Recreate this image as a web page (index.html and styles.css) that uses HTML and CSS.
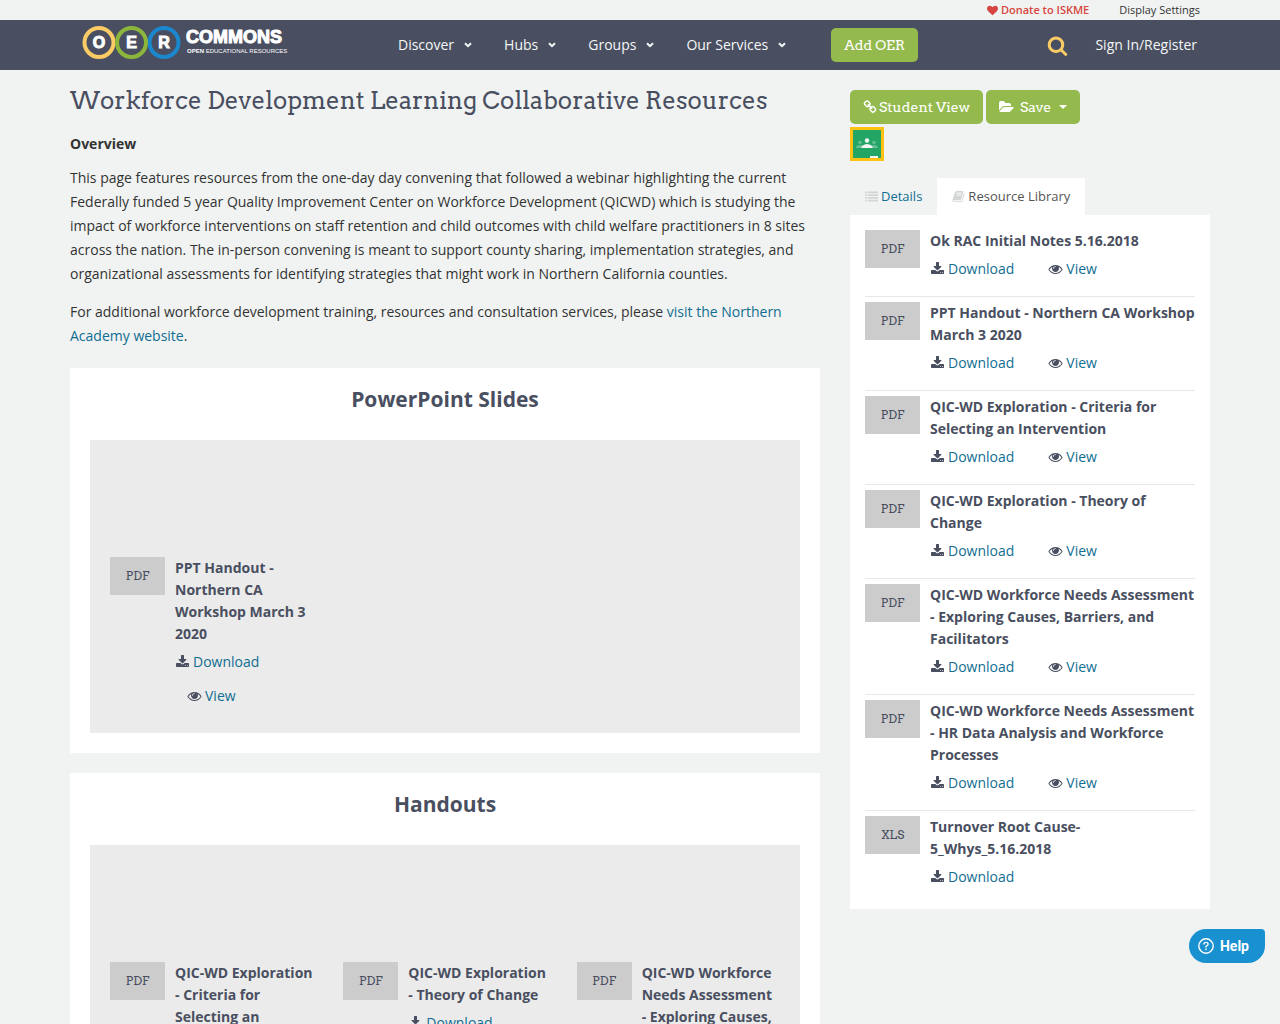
FILE: index.html
```html
<!DOCTYPE html>
<html lang="en">
<head>
<meta charset="utf-8">
<meta name="viewport" content="width=device-width, initial-scale=1">
<title>Workforce Development Learning Collaborative Resources | OER Commons</title>
<link rel="stylesheet" href="styles.css">
</head>
<body>
<svg class="sprite" aria-hidden="true">
  <symbol id="i-heart" viewBox="0 0 1792 1792"><path d="M896 1664q-26 0-44-18l-624-602q-10-8-27.500-26t-55.500-65.500-68-97.500-53.500-121-23.500-138q0-220 127-344t351-124q62 0 126.500 21.500t120 58 95.500 68.500 76 68q36-36 76-68t95.500-68.500 120-58 126.500-21.500q224 0 351 124t127 344q0 221-229 450l-623 600q-18 18-44 18z"/></symbol>
  <symbol id="i-search" viewBox="0 0 1792 1792"><path d="M1216 832q0-185-131.500-316.500t-316.500-131.500-316.500 131.500-131.500 316.500 131.500 316.500 316.500 131.500 316.500-131.500 131.500-316.500zm512 832q0 52-38 90t-90 38q-54 0-90-38l-343-342q-179 124-399 124-143 0-273.500-55.500t-225-150-150-225-55.500-273.500 55.500-273.500 150-225 225-150 273.500-55.500 273.500 55.500 225 150 150 225 55.500 273.500q0 220-124 399l343 343q37 37 37 90z"/></symbol>
  <symbol id="i-download" viewBox="0 0 1792 1792"><path d="M1344 1344q0-26-19-45t-45-19-45 19-19 45 19 45 45 19 45-19 19-45zm256 0q0-26-19-45t-45-19-45 19-19 45 19 45 45 19 45-19 19-45zm128-224v320q0 40-28 68t-68 28h-1472q-40 0-68-28t-28-68v-320q0-40 28-68t68-28h465l135 136q58 56 136 56t136-56l136-136h464q40 0 68 28t28 68zm-325-569q17 41-14 70l-448 448q-18 19-45 19t-45-19l-448-448q-31-29-14-70 17-39 59-39h256v-448q0-26 19-45t45-19h256q26 0 45 19t19 45v448h256q42 0 59 39z"/></symbol>
  <symbol id="i-eye" viewBox="0 0 1792 1792"><path d="M1664 960q-152-236-381-353 61 104 61 225 0 185-131.500 316.500t-316.500 131.500-316.500-131.500-131.500-316.500q0-121 61-225-229 117-381 353 133 205 333.500 326.500t434.500 121.500 434.500-121.500 333.500-326.500zm-720-384q0-20-14-34t-34-14q-125 0-214.500 89.500t-89.500 214.500q0 20 14 34t34 14 34-14 14-34q0-86 61-147t147-61q20 0 34-14t14-34zm848 384q0 34-20 69-140 230-376.500 368.500t-499.500 138.500-499.500-139-376.500-368q-20-35-20-69t20-69q140-229 376.500-368t499.500-139 499.500 139 376.500 368q20 35 20 69z"/></symbol>
  <symbol id="i-folder" viewBox="0 0 1920 1792"><path d="M1879 952q0 31-31 66l-336 396q-43 51-120.500 86.500t-143.500 35.500h-1088q-34 0-60.500-13t-26.500-43q0-31 31-66l336-396q43-51 120.500-86.500t143.500-35.500h1088q34 0 60.500 13t26.500 43zm-343-344v160h-832q-94 0-197 47.500t-164 119.500l-337 396-5 6q0-4-.5-12.500t-.5-12.500v-960q0-92 66-158t158-66h320q92 0 158 66t66 158v32h544q92 0 158 66t66 158z"/></symbol>
  <symbol id="i-link" viewBox="0 0 1792 1792"><path d="M1520 1216q0-40-28-68l-208-208q-28-28-68-28-42 0-72 32 3 3 19 18.500t21.500 21.500 15 19 13 25.500 3.500 27.500q0 40-28 68t-68 28q-15 0-27.500-3.500t-25.500-13-19-15-21.500-21.500-18.500-19q-33 31-33 73 0 40 28 68l206 207q27 27 68 27 40 0 68-26l147-146q28-28 28-67zm-703-705q0-40-28-68l-206-207q-28-28-68-28-39 0-68 27l-147 146q-28 28-28 67 0 40 28 68l208 208q27 27 68 27 42 0 72-31-3-3-19-18.500t-21.500-21.500-15-19-13-25.500-3.500-27.500q0-40 28-68t68-28q15 0 27.500 3.500t25.500 13 19 15 21.500 21.500 18.500 19q33-31 33-73zm895 705q0 120-85 203l-147 146q-83 83-203 83-121 0-204-85l-206-207q-83-83-83-203 0-123 88-209l-88-88q-86 88-208 88-120 0-204-84l-208-208q-84-84-84-204t85-203l147-146q83-83 203-83 121 0 204 85l206 207q83 83 83 203 0 123-88 209l88 88q86-88 208-88 120 0 204 84l208 208q84 84 84 204z"/></symbol>
  <symbol id="i-book" viewBox="0 0 1792 1792"><path d="M1703 478q40 57 18 129l-275 906q-19 64-76.500 107.500t-122.500 43.500h-923q-77 0-148.500-53.500t-99.500-131.500q-24-67-2-127 0-4 3-27t4-37q1-8-3-21.500t-3-19.500q2-11 8-21t16.500-23.500 16.500-23.500q23-38 45-91.500t30-91.500q3-10 .5-30t-.5-28q3-11 17-28t17-23q21-36 42-92t25-90q1-9-2.500-32t.5-28q4-13 22-30.500t22-22.500q19-26 42.500-84.500t27.500-96.500q1-8-3-25.500t-2-26.500q2-8 9-18t18-23 17-21q8-12 16.500-30.500t15-35 16-36 19.500-32 26.500-23.500 36-11.500 47.500 5.500l-1 3q38-9 51-9h761q74 0 114 56t18 130l-274 906q-36 119-71.500 153.500t-128.500 34.500h-869q-27 0-38 15-11 16-1 43 24 70 144 70h923q29 0 56-15.500t35-41.500l300-987q7-22 5-57 38 15 59 43zm-1064 2q-4 13 2 22.500t20 9.500h608q13 0 25.500-9.500t16.500-22.500l21-64q4-13-2-22.500t-20-9.500h-608q-13 0-25.500 9.500t-16.500 22.500zm-83 256q-4 13 2 22.500t20 9.500h608q13 0 25.500-9.500t16.500-22.500l21-64q4-13-2-22.500t-20-9.500h-608q-13 0-25.500 9.500t-16.500 22.500z"/></symbol>
  <symbol id="i-list" viewBox="0 0 14 14"><path d="M0 1.500h2v2H0zM3 1.500h11v2H3zM0 4.500h2v2H0zM3 4.500h11v2H3zM0 7.500h2v2H0zM3 7.500h11v2H3zM0 10.500h2v2H0zM3 10.500h11v2H3z"/></symbol>
  <symbol id="i-chevron" viewBox="0 0 8 6"><path d="M1 1.200l3 3 3-3" fill="none" stroke="currentColor" stroke-width="2"/></symbol>
  <symbol id="i-caret" viewBox="0 0 8 4"><path d="M0 0h8L4 4z"/></symbol>
</svg>

<header>
  <div class="container utility">
    <a class="donate" href="#donate"><svg class="icon"><use href="#i-heart"/></svg>Donate to ISKME</a>
    <a href="#display">Display Settings</a>
  </div>
  <div class="bar">
    <div class="container bar-inner">
      <a class="logo" href="#home" aria-label="OER Commons">
        <svg width="208" height="36" viewBox="0 0 208 36">
          <g fill="none" stroke-width="4">
            <circle cx="17" cy="17.500" r="14.500" stroke="#fbcb66"/>
            <circle cx="82" cy="17.500" r="14.500" stroke="#1b87cd"/>
            <circle cx="49.500" cy="17.500" r="14.500" stroke="#8db63c"/>
          </g>
          <g class="logo-letters" text-anchor="middle">
            <text x="17" y="23">O</text><text x="49.500" y="23">E</text><text x="82" y="23">R</text>
          </g>
          <text class="logo-name" x="104" y="18">COMMONS</text>
          <text class="logo-tag" x="105" y="28"><tspan class="logo-open">OPEN</tspan> EDUCATIONAL RESOURCES</text>
        </svg>
      </a>
      <nav class="menu" aria-label="Main">
        <a href="#discover">Discover<svg class="chevron"><use href="#i-chevron"/></svg></a>
        <a href="#hubs">Hubs<svg class="chevron"><use href="#i-chevron"/></svg></a>
        <a href="#groups">Groups<svg class="chevron"><use href="#i-chevron"/></svg></a>
        <a href="#services">Our Services<svg class="chevron"><use href="#i-chevron"/></svg></a>
      </nav>
      <button class="btn" type="button">Add OER</button>
      <div class="account">
        <button class="search" type="button" aria-label="Search"><svg><use href="#i-search"/></svg></button>
        <a href="#signin">Sign In/Register</a>
      </div>
    </div>
  </div>
</header>

<div class="container page">
  <main>
    <h1>Workforce Development Learning Collaborative Resources</h1>
    <h2 class="overview">Overview</h2>
    <p>This page features resources from the one-day day convening that followed a webinar highlighting the current Federally funded 5 year Quality Improvement Center on Workforce Development (QICWD) which is studying the impact of workforce interventions on staff retention and child outcomes with child welfare practitioners in 8 sites across the nation. The in-person convening is meant to support county sharing, implementation strategies, and organizational assessments for identifying strategies that might work in Northern California counties.</p>
    <p>For additional workforce development training, resources and consultation services, please <a href="#academy">visit the Northern Academy website</a>.</p>

    <section class="panel">
      <h2>PowerPoint Slides</h2>
      <div class="shelf">
        <article class="file">
          <span class="thumb">PDF</span>
          <div><h3>PPT Handout - Northern CA Workshop March 3 2020</h3>
          <div class="actions"><a href="#d"><svg class="icon"><use href="#i-download"/></svg>Download</a><a class="view" href="#v"><svg class="icon"><use href="#i-eye"/></svg>View</a></div></div>
        </article>
      </div>
    </section>

    <section class="panel">
      <h2>Handouts</h2>
      <div class="shelf">
        <article class="file">
          <span class="thumb">PDF</span>
          <div><h3>QIC-WD Exploration - Criteria for Selecting an Intervention</h3>
          <div class="actions"><a href="#d"><svg class="icon"><use href="#i-download"/></svg>Download</a><a class="view" href="#v"><svg class="icon"><use href="#i-eye"/></svg>View</a></div></div>
        </article>
        <article class="file">
          <span class="thumb">PDF</span>
          <div><h3>QIC-WD Exploration - Theory of Change</h3>
          <div class="actions"><a href="#d"><svg class="icon"><use href="#i-download"/></svg>Download</a><a class="view" href="#v"><svg class="icon"><use href="#i-eye"/></svg>View</a></div></div>
        </article>
        <article class="file">
          <span class="thumb">PDF</span>
          <div><h3>QIC-WD Workforce Needs Assessment - Exploring Causes, Barriers, and Facilitators</h3>
          <div class="actions"><a href="#d"><svg class="icon"><use href="#i-download"/></svg>Download</a><a class="view" href="#v"><svg class="icon"><use href="#i-eye"/></svg>View</a></div></div>
        </article>
      </div>
    </section>
  </main>

  <aside>
    <div class="tools">
      <button class="btn" type="button"><svg class="icon link"><use href="#i-link"/></svg>Student View</button>
      <button class="btn" type="button"><svg class="icon folder"><use href="#i-folder"/></svg>Save<svg class="caret"><use href="#i-caret"/></svg></button>
      <button class="classroom" type="button" aria-label="Share to Google Classroom">
        <svg width="34" height="34" viewBox="0 0 34 34">
          <path fill="#ffc112" d="M0 0h34v34H0z"/><path fill="#23a566" d="M3 3h28v28H3z"/>
          <g fill="#65bf94"><circle cx="10" cy="15.500" r="1.700"/><circle cx="24" cy="15.500" r="1.700"/><path d="M6 21v-1q1-2 4-2t4 2v1zM20 21v-1q1-2 4-2t4 2v1z"/></g>
          <g fill="#f5f7f5"><circle cx="17" cy="13.500" r="2.200"/><path d="M11.500 21v-1.500q2-2.500 5.500-2.500t5.500 2.500V21zM20 29h8v2h-8z"/></g>
        </svg>
      </button>
    </div>
    <nav class="tabs" aria-label="Resource">
      <a href="#details"><svg class="icon"><use href="#i-list"/></svg>Details</a>
      <a class="active" href="#library"><svg class="icon"><use href="#i-book"/></svg>Resource Library</a>
    </nav>
    <div class="library">
      <article class="file">
        <span class="thumb">PDF</span>
        <div><h3>Ok RAC Initial Notes 5.16.2018</h3>
        <div class="actions"><a href="#d"><svg class="icon"><use href="#i-download"/></svg>Download</a><a class="view" href="#v"><svg class="icon"><use href="#i-eye"/></svg>View</a></div></div>
      </article>
      <article class="file">
        <span class="thumb">PDF</span>
        <div><h3>PPT Handout - Northern CA Workshop March 3 2020</h3>
        <div class="actions"><a href="#d"><svg class="icon"><use href="#i-download"/></svg>Download</a><a class="view" href="#v"><svg class="icon"><use href="#i-eye"/></svg>View</a></div></div>
      </article>
      <article class="file">
        <span class="thumb">PDF</span>
        <div><h3>QIC-WD Exploration - Criteria for Selecting an Intervention</h3>
        <div class="actions"><a href="#d"><svg class="icon"><use href="#i-download"/></svg>Download</a><a class="view" href="#v"><svg class="icon"><use href="#i-eye"/></svg>View</a></div></div>
      </article>
      <article class="file">
        <span class="thumb">PDF</span>
        <div><h3>QIC-WD Exploration - Theory of Change</h3>
        <div class="actions"><a href="#d"><svg class="icon"><use href="#i-download"/></svg>Download</a><a class="view" href="#v"><svg class="icon"><use href="#i-eye"/></svg>View</a></div></div>
      </article>
      <article class="file">
        <span class="thumb">PDF</span>
        <div><h3>QIC-WD Workforce Needs Assessment - Exploring Causes, Barriers, and Facilitators</h3>
        <div class="actions"><a href="#d"><svg class="icon"><use href="#i-download"/></svg>Download</a><a class="view" href="#v"><svg class="icon"><use href="#i-eye"/></svg>View</a></div></div>
      </article>
      <article class="file">
        <span class="thumb">PDF</span>
        <div><h3>QIC-WD Workforce Needs Assessment - HR Data Analysis and Workforce Processes</h3>
        <div class="actions"><a href="#d"><svg class="icon"><use href="#i-download"/></svg>Download</a><a class="view" href="#v"><svg class="icon"><use href="#i-eye"/></svg>View</a></div></div>
      </article>
      <article class="file">
        <span class="thumb">XLS</span>
        <div><h3>Turnover Root Cause-5_Whys_5.16.2018</h3>
        <div class="actions"><a href="#d"><svg class="icon"><use href="#i-download"/></svg>Download</a></div></div>
      </article>
    </div>
  </aside>
</div>

<button class="help" type="button">
  <svg class="question" viewBox="0 0 16 16" stroke="currentColor" stroke-width="1.400"><circle cx="8" cy="8" r="7.200"/><path d="M5.900 6.500Q5.900 4.400 8 4.400t2.100 1.900Q10.100 7.500 8 8.300v1.200"/><path d="M8 10.600v1.600"/></svg>
  Help
</button>
</body>
</html>
```
FILE: styles.css
```css
* { box-sizing: border-box; }

body {
  margin: 0;
  background: #f0f3f2;
  color: #333;
  font: 14px/24px "Open Sans", "Noto Sans", sans-serif;
}

a { color: #116d91; text-decoration: none; }
button { font: inherit; border: 0; cursor: pointer; }
h1, h2, h3, p { margin: 0; }

.sprite { display: none; }
svg { flex: none; fill: currentColor; }
.icon { width: 14px; height: 14px; }

.container { max-width: 1170px; margin: 0 auto; padding: 0 15px; }

.utility {
  display: flex;
  justify-content: flex-end;
  gap: 30px;
  padding-right: 25px;
  font-size: 11px;
  line-height: 20px;
}
.utility a { color: #333; }
.utility a.donate { display: flex; align-items: center; gap: 3px; color: #d64541; font-weight: 600; }
.utility .icon { width: 11px; height: 11px; }

.bar { background: #494f60; }
.bar-inner { display: flex; align-items: center; min-height: 50px; }
.bar a { color: #f5f6f7; }
.logo { display: flex; margin: 0 108px 4px 12px; }
.logo text { fill: #fff; font-family: "Liberation Sans", Arial, sans-serif; font-weight: 700; }
.logo-letters text { font-size: 16px; stroke: #fff; stroke-width: 1px; }
.logo .logo-name { font-size: 18px; stroke: #fff; stroke-width: 1px; }
.logo .logo-tag { font-size: 6px; font-weight: 400; }
.logo .logo-open { font-weight: 700; }

.menu { display: flex; gap: 32px; margin-right: 45px; }
.menu a { display: flex; align-items: center; gap: 10px; }
.chevron { width: 8px; height: 6px; }

.btn {
  display: inline-flex;
  align-items: center;
  height: 34px;
  padding: 0 13px;
  border-radius: 5px;
  background: #94ba4e;
  color: #fff;
  font: 14px/20px Arvo, "DejaVu Serif", serif;
}
.account { display: flex; align-items: center; gap: 27px; margin-left: auto; padding-right: 13px; }
.search { display: flex; padding: 0; background: none; color: #fbcb66; }
.search svg { width: 21px; height: 21px; }

.page { display: grid; grid-template-columns: 25fr 12fr; gap: 30px; align-items: start; }

main { padding-bottom: 20px; }
h1 { margin-top: 14px; color: #494f60; font: 400 24px/33px Arvo, "DejaVu Serif", serif; }
.overview { margin: 15px 0 10px; font-size: 14px; line-height: 24px; }
p { margin-bottom: 14px; }

.panel { margin-top: 20px; padding: 20px; background: #fff; }
.panel h2 { margin-bottom: 29px; color: #494f60; font-size: 21px; line-height: 23px; text-align: center; }
.shelf {
  display: grid;
  grid-template-columns: repeat(3, 1fr);
  padding: 117px 5px 20px;
  background: #ebebeb;
}
.shelf .file { padding: 0 15px; }

.file { display: flex; align-items: flex-start; gap: 10px; }
.file > div { flex: 1; min-width: 0; }
.file h3 { color: #494f60; font-size: 14px; line-height: 22px; }
.thumb {
  flex: none;
  width: 55px;
  background: #ccc;
  color: #494f60;
  font: 12px/38px Arvo, "DejaVu Serif", serif;
  text-align: center;
}
.actions { display: flex; flex-wrap: wrap; column-gap: 22px; line-height: 34px; }
.actions a { display: flex; align-items: center; gap: 3px; }
.actions a.view { padding-left: 12px; }
.actions .icon { width: 15px; height: 14px; color: #494f60; }

.tools { display: flex; flex-wrap: wrap; gap: 3px; padding: 20px 100px 17px 0; }
.link { margin-right: 2px; }
.folder { width: 15px; margin-right: 6px; }
.caret { width: 8px; height: 4px; margin-left: 8px; }
.classroom { display: flex; padding: 0; background: none; }

.tabs { display: flex; font-size: 13px; line-height: 37px; }
.tabs a { display: flex; align-items: center; gap: 3px; padding: 0 15px; }
.tabs .icon { width: 13px; height: 13px; color: #d4d6d6; }
.tabs a.active { background: #fff; color: #555; }

.library { padding: 15px; background: #fff; }
.library .file + .file { margin-top: 10px; padding-top: 5px; border-top: 1px solid #e8e8e8; }

.help {
  position: fixed;
  right: 15px;
  bottom: 61px;
  display: flex;
  align-items: center;
  gap: 6px;
  height: 34px;
  padding: 0 16px 0 9px;
  border-radius: 17px 4px 17px 17px;
  background: #1990d0;
  color: #fff;
  font: 700 14px/20px Roboto, sans-serif;
}
.question { width: 16px; height: 16px; fill: none; }

@media (max-width: 1150px) {
  .bar-inner { flex-wrap: wrap; gap: 12px 24px; padding-top: 8px; padding-bottom: 8px; }
  .logo, .menu { margin: 0; }
  .menu { flex-wrap: wrap; gap: 8px 20px; }
}
@media (max-width: 900px) {
  .page { grid-template-columns: 1fr; }
}
@media (max-width: 640px) {
  .shelf { grid-template-columns: 1fr; row-gap: 20px; }
}
```
